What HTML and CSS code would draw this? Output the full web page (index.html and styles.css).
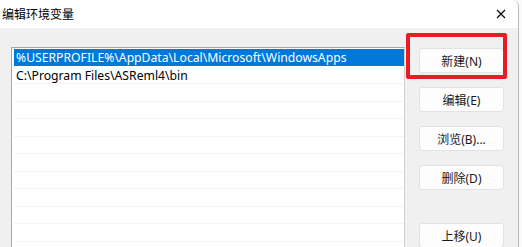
FILE: index.html
```html
<!DOCTYPE html>
<html lang="zh-CN">
<head>
    <meta charset="UTF-8">
    <title>编辑环境变量</title>
    <link rel="stylesheet" href="styles.css">
</head>
<body>
    <div class="window">
        <!-- Title bar -->
        <div class="titlebar">
            <span class="title">编辑环境变量</span>
            <svg class="close" width="10" height="10" viewBox="0 0 10 10">
                <path d="M1 1 L9 9 M9 1 L1 9" stroke="#000" stroke-width="1.1" fill="none"/>
            </svg>
        </div>

        <div class="content">
            <!-- Path list -->
            <ul class="pathlist">
                <li class="selected">%USERPROFILE%\AppData\Local\Microsoft\WindowsApps</li>
                <li>C:\Program Files\ASReml4\bin</li>
                <li></li>
                <li></li>
                <li></li>
                <li></li>
                <li></li>
                <li></li>
                <li></li>
                <li></li>
                <li></li>
                <li></li>
            </ul>

            <!-- Buttons -->
            <div class="actions">
                <button>新建(N)</button>
                <button>编辑(E)</button>
                <button>浏览(B)...</button>
                <button>删除(D)</button>
                <button class="move-up">上移(U)</button>
            </div>
        </div>

        <!-- Red annotation box -->
        <div class="highlight"></div>
    </div>
</body>
</html>
```

FILE: styles.css
```css
body {
    margin: 0;
    background-color: #fafafa;
    font-family: "Segoe UI", "Noto Sans", "Noto Sans CJK SC", sans-serif;
    font-size: 12px;
    color: #000;
    overflow: hidden;
}
.window {
    position: relative;
    width: 518px;
    height: 260px;
    background-color: #f0f0f0;
    border-right: 1px solid #b8b8b8;
    border-top-right-radius: 7px;
    overflow: hidden;
}
.titlebar {
    height: 28px;
    background-color: #fff;
    display: flex;
    align-items: center;
    justify-content: space-between;
    padding: 0 12px 0 2px;
}
.title {
    font-family: "Noto Sans CJK SC", sans-serif;
    font-size: 12px;
    line-height: 28px;
}
.close {
    display: block;
}
.content {
    display: flex;
    padding: 19px 0 0 11px;
}
.pathlist {
    list-style: none;
    margin: 0;
    padding: 1px 0 0 2px;
    width: 390px;
    height: 220px;
    background-color: #fff;
    border: 1px solid #a8a8a8;
    border-right-color: #d0d0d0;
    border-bottom: none;
    font-size: 12.2px;
}
.pathlist li {
    height: 16.5px;
    line-height: 17px;
    padding-left: 2px;
    border-bottom: 1px solid #f3f3f3;
    white-space: nowrap;
}
.pathlist li.selected {
    background-color: #0078d7;
    color: #fff;
    border-bottom-color: #fff;
}
.actions {
    display: flex;
    flex-direction: column;
    gap: 14px;
    padding-top: 1px;
    margin-left: 14px;
}
button {
    width: 85px;
    height: 25px;
    background-color: #fdfdfd;
    border: 1px solid #e2e2e2;
    border-radius: 3px;
    font-family: "Segoe UI", "Noto Sans", "Noto Sans CJK SC", sans-serif;
    font-size: 12px;
    color: #1a1a1a;
    padding: 0;
}
button.move-up {
    margin-top: 19px;
}
.highlight {
    position: absolute;
    left: 406px;
    top: 33px;
    width: 93px;
    height: 38px;
    border: 4px solid #e81c24;
    border-radius: 2px;
}
```
